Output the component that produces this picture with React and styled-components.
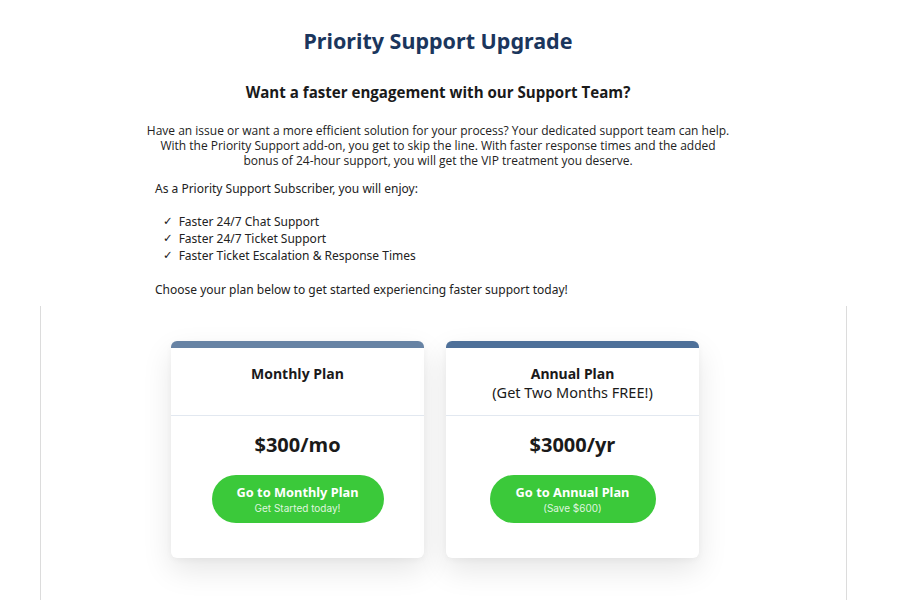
import React from "react";
import styled, { createGlobalStyle } from "styled-components";

const GlobalStyle = createGlobalStyle`
  html, body {
    margin: 0;
    padding: 0;
    background: #ffffff;
  }
  body {
    font-family: "Open Sans", "Liberation Sans", sans-serif;
    color: #1a1a1a;
  }
`;

const Page = styled.div`
  display: flex;
  flex-direction: column;
  align-items: center;
  padding-top: 27px;
`;

const Title = styled.h1`
  margin: 0 0 0 -24px;
  font-family: "Noto Sans", "Liberation Sans", sans-serif;
  font-size: 21.5px;
  line-height: 28px;
  font-weight: 700;
  color: #1b365d;
  text-align: center;
`;

const Intro = styled.div`
  width: 590px;
  margin-left: -24px;
  margin-top: 26px;
`;

const Subtitle = styled.h2`
  margin: 0;
  font-size: 15.1px;
  line-height: 22px;
  font-weight: 700;
  text-align: center;
`;

const Lead = styled.p`
  margin: 20px 0 0;
  font-size: 12px;
  line-height: 15px;
  text-align: center;
  white-space: nowrap;
  color: #222;
`;

const Body = styled.div`
  padding-left: 12px;
  font-family: "Noto Sans", "Liberation Sans", sans-serif;
  font-size: 12px;
  color: #222;
`;

const Note = styled.p`
  margin: ${(p) => p.$top}px 0 0;
  line-height: 17px;
  white-space: nowrap;
`;

const Perks = styled.ul`
  list-style: none;
  margin: 16px 0 0;
  padding: 0 0 0 8px;
`;

const Perk = styled.li`
  display: flex;
  align-items: center;
  gap: 6px;
  height: 17px;
  line-height: 17px;
  &::before {
    content: "✓";
    font-family: "DejaVu Sans", sans-serif;
    font-size: 11.5px;
    line-height: 17px;
  }
`;

const PlansArea = styled.section`
  align-self: stretch;
  margin: 8px 53px 0 40px;
  border-left: 1px solid #dcdcdc;
  border-right: 1px solid #dcdcdc;
  display: flex;
  align-items: flex-start;
  gap: 22px;
  padding: 35px 0 42px 130px;
`;

const Card = styled.div`
  width: 253px;
  background: #fff;
  border-radius: 6px;
  overflow: hidden;
  box-shadow: 0 12px 30px rgba(0, 0, 0, 0.1), 0 2px 6px rgba(0, 0, 0, 0.04);
  border-top: 7px solid ${(p) => p.$accent};
  display: flex;
  flex-direction: column;
  align-items: center;
  padding-bottom: 35px;
`;

const CardHead = styled.div`
  align-self: stretch;
  height: 68px;
  box-sizing: border-box;
  padding-top: 16px;
  border-bottom: 1px solid #e2e8f0;
  text-align: center;
`;

const PlanName = styled.div`
  font-size: 14px;
  line-height: 19px;
  font-weight: 700;
  font-family: ${(p) => (p.$geo ? `"Noto Sans", "Liberation Sans", sans-serif` : `"Open Sans", sans-serif`)};
`;

const PlanNote = styled.div`
  font-family: "Noto Sans", "Liberation Sans", sans-serif;
  font-size: 14.5px;
  line-height: 19px;
`;

const Price = styled.div`
  margin-top: 17px;
  font-size: 20px;
  line-height: 24px;
  font-weight: 700;
`;

const CTA = styled.a`
  margin-top: 18px;
  width: ${(p) => p.$w}px;
  height: 48px;
  box-sizing: border-box;
  padding-top: 8px;
  border-radius: 24px;
  background: #3bc93a;
  color: #fff;
  text-decoration: none;
  display: flex;
  flex-direction: column;
  align-items: center;
`;

const CTATitle = styled.span`
  font-family: "Noto Sans", "Liberation Sans", sans-serif;
  font-size: 12.8px;
  line-height: 18px;
  font-weight: 700;
`;

const CTASub = styled.span`
  font-family: Inter, "Liberation Sans", sans-serif;
  font-size: 10px;
  line-height: 14px;
  color: rgba(255, 255, 255, 0.85);
`;

const plans = [
  {
    name: "Monthly Plan",
    price: "$300/mo",
    accent: "#6783a4",
    cta: "Go to Monthly Plan",
    sub: "Get Started today!",
    w: 172,
  },
  {
    name: "Annual Plan",
    note: "(Get Two Months FREE!)",
    price: "$3000/yr",
    accent: "#4e7099",
    cta: "Go to Annual Plan",
    sub: "(Save $600)",
    w: 166,
    geo: true,
  },
];

export default function App() {
  return (
    <>
      <GlobalStyle />
      <Page>
        <Title>Priority Support Upgrade</Title>
        <Intro>
          <Subtitle>Want a faster engagement with our Support Team?</Subtitle>
          <Lead>
            Have an issue or want a more efficient solution for your process? Your dedicated support team can help.
            <br />
            With the Priority Support add-on, you get to skip the line. With faster response times and the added
            <br />
            bonus of 24-hour support, you will get the VIP treatment you deserve.
          </Lead>
          <Body>
            <Note $top={12}>As a Priority Support Subscriber, you will enjoy:</Note>
            <Perks>
              <Perk>Faster 24/7 Chat Support</Perk>
              <Perk>Faster 24/7 Ticket Support</Perk>
              <Perk>Faster Ticket Escalation &amp; Response Times</Perk>
            </Perks>
            <Note $top={17}>Choose your plan below to get started experiencing faster support today!</Note>
          </Body>
        </Intro>
        <PlansArea>
          {plans.map((p) => (
            <Card key={p.name} $accent={p.accent}>
              <CardHead>
                <PlanName $geo={p.geo}>{p.name}</PlanName>
                {p.note && <PlanNote>{p.note}</PlanNote>}
              </CardHead>
              <Price>{p.price}</Price>
              <CTA href="#" $w={p.w}>
                <CTATitle>{p.cta}</CTATitle>
                <CTASub>{p.sub}</CTASub>
              </CTA>
            </Card>
          ))}
        </PlansArea>
      </Page>
    </>
  );
}
